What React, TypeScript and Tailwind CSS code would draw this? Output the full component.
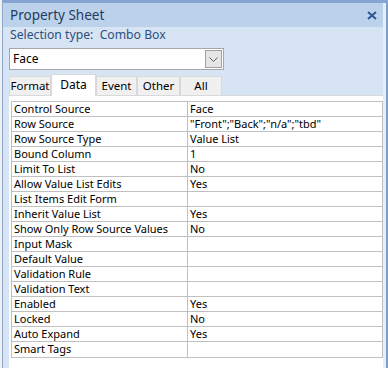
import React from 'react';

const rows: [string, string][] = [
  ['Control Source', 'Face'],
  ['Row Source', '"Front";"Back";"n/a";"tbd"'],
  ['Row Source Type', 'Value List'],
  ['Bound Column', '1'],
  ['Limit To List', 'No'],
  ['Allow Value List Edits', 'Yes'],
  ['List Items Edit Form', ''],
  ['Inherit Value List', 'Yes'],
  ['Show Only Row Source Values', 'No'],
  ['Input Mask', ''],
  ['Default Value', ''],
  ['Validation Rule', ''],
  ['Validation Text', ''],
  ['Enabled', 'Yes'],
  ['Locked', 'No'],
  ['Auto Expand', 'Yes'],
  ['Smart Tags', ''],
];

const Tab = ({ label, width, active }: { label: string; width: string; active?: boolean }) => {
  if (active) {
    return (
      <div className={`${width} h-[22px] -mb-px relative z-10 bg-white border border-b-0 border-[#d9d9d9] flex items-center justify-center pb-[1px] text-[12px] text-black`}>
        {label}
      </div>
    );
  }
  return (
    <div className={`${width} h-[19px] bg-[#f0f0f0] border border-b-0 border-[#d9d9d9] flex items-center justify-center text-[11.5px] text-black`}>
      {label}
    </div>
  );
};

const App = () => {
  return (
    <div className="w-[388px] h-[368px] flex bg-[#f0f0f0] overflow-hidden" style={{ fontFamily: '"Noto Sans", "Open Sans", sans-serif' }}>
      <div className="w-[2px] shrink-0" />
      <div className="flex-1 flex border-l border-l-[#8ea7cc] border-t-[3px] border-t-[#86a5d3] border-r-2 border-r-[#7d9fd0]">
        <div className="flex-1 flex flex-col">
          {/* title bar */}
          <div className="h-[24px] bg-[#bcd2ea] flex items-center justify-between pl-[7px] pr-[5px]">
            <span className="text-[13.5px] text-[#1f3b64]">Property Sheet</span>
            <svg width="10" height="9" viewBox="0 0 10 9" className="mr-[1px]">
              <path d="M1 1 L9 8 M9 1 L1 8" stroke="#2b5797" strokeWidth="2" fill="none" />
            </svg>
          </div>

          <div className="flex-1 flex flex-col bg-[#d6e4f3] pl-[6px]">
            <div className="h-[16px] flex items-center pl-[1px] text-[12.2px] text-[#2d4f7f] whitespace-pre">
              Selection type:  Combo Box
            </div>

            {/* combo */}
            <div className="mt-[5px] w-[215px] h-[22px] bg-white border border-[#a6a6a6] flex items-center p-[1px] pl-[3px]">
              <span className="flex-1 text-[12px] text-black">Face</span>
              <div className="w-[17px] h-[18px] bg-[#e5e5e5] border border-[#a0a0a0] flex items-center justify-center">
                <svg width="9" height="5" viewBox="0 0 9 5">
                  <path d="M0.5 0.5 L4.5 4.5 L8.5 0.5" stroke="#606060" strokeWidth="1" fill="none" />
                </svg>
              </div>
            </div>

            {/* tabs */}
            <div className="mt-[4px] h-[21px] flex items-end">
              <Tab label="Format" width="w-[42px]" />
              <Tab label="Data" width="w-[45px]" active />
              <Tab label="Event" width="w-[41px]" />
              <Tab label="Other" width="w-[43px]" />
              <Tab label="All" width="w-[42px]" />
            </div>

            {/* panel */}
            <div className="flex-1 bg-white border-t border-[#d9d9d9] pt-[5px] pl-[2px]">
              <div className="border border-[#c0c0c0] text-[11px] text-black">
                {rows.map(([label, value], i) => (
                  <div key={label} className={`flex h-[15px] ${i < rows.length - 1 ? 'border-b border-[#c0c0c0]' : ''}`}>
                    <div className="w-[176px] shrink-0 border-r border-[#c0c0c0] pl-[2px] leading-[14px] whitespace-nowrap">
                      {label}
                    </div>
                    <div className="flex-1 pl-[2px] leading-[14px] whitespace-nowrap">{value}</div>
                  </div>
                ))}
              </div>
            </div>
          </div>
        </div>
        <div className="w-[3px] shrink-0 bg-[#e8eef6]" />
      </div>
    </div>
  );
};

export default App;
